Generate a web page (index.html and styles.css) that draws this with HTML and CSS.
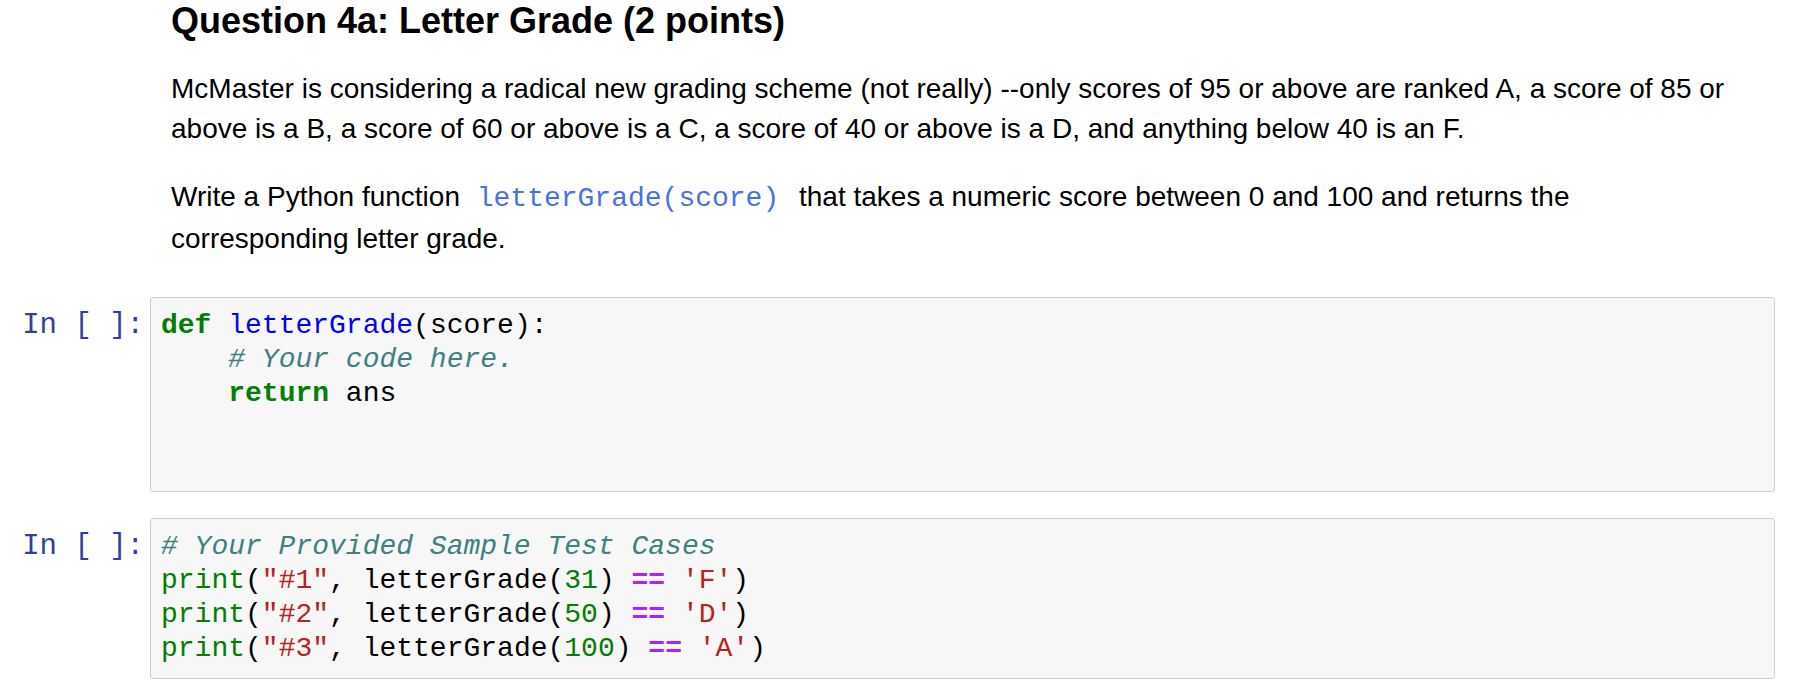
FILE: index.html
```html
<!DOCTYPE html>
<html lang="en">
<head>
<meta charset="utf-8">
<title>Question 4a: Letter Grade</title>
<link rel="stylesheet" href="styles.css">
</head>
<body>
<div class="notebook">
  <div class="cell md-cell">
    <div class="prompt"></div>
    <div class="md-body">
      <h2 class="md-h2">Question 4a: Letter Grade (2 points)</h2>
      <p class="md-p">McMaster is considering a radical new grading scheme (not really) --only scores of 95 or above are ranked A, a score of 85 or above is a B, a score of 60 or above is a C, a score of 40 or above is a D, and anything below 40 is an F.</p>
      <p class="md-p md-p2">Write a Python function <code class="inline-code">letterGrade(score)</code> that takes a numeric score between 0 and 100 and returns the corresponding letter grade.</p>
    </div>
  </div>

  <div class="cell code-cell">
    <div class="prompt">In&nbsp;[&nbsp;]:</div>
    <div class="input-box"><pre class="code"><span class="k">def</span> <span class="nf">letterGrade</span>(score):
    <span class="c">#&nbsp;Your code here.</span>
    <span class="k">return</span> ans
&nbsp;
&nbsp;</pre></div>
  </div>

  <div class="cell code-cell cell-2">
    <div class="prompt">In&nbsp;[&nbsp;]:</div>
    <div class="input-box"><pre class="code"><span class="c">#&nbsp;Your Provided Sample Test Cases</span>
<span class="nb">print</span>(<span class="s">"#1"</span>, letterGrade(<span class="mi">31</span>) <span class="o">==</span> <span class="s">'F'</span>)
<span class="nb">print</span>(<span class="s">"#2"</span>, letterGrade(<span class="mi">50</span>) <span class="o">==</span> <span class="s">'D'</span>)
<span class="nb">print</span>(<span class="s">"#3"</span>, letterGrade(<span class="mi">100</span>) <span class="o">==</span> <span class="s">'A'</span>)</pre></div>
  </div>
</div>
</body>
</html>
```

FILE: styles.css
```css
html, body {
  margin: 0;
  padding: 0;
  background: #ffffff;
}

body {
  font-family: "Liberation Sans", Arial, Helvetica, sans-serif;
  color: #000000;
}

.notebook {
  width: 1775px;
}

.cell {
  display: flex;
  align-items: flex-start;
}

.prompt {
  width: 150px;
  flex: 0 0 150px;
  box-sizing: border-box;
  padding-right: 6px;
  padding-top: 12px;
  text-align: right;
  font-family: "Liberation Mono", "Courier New", monospace;
  font-size: 29px;
  line-height: 34px;
  color: #303F9F;
  white-space: nowrap;
}

.md-body {
  flex: 1;
  padding-left: 21px;
  padding-right: 32px;
}

.md-h2 {
  margin: 0;
  font-size: 36px;
  line-height: 41px;
  font-weight: bold;
}

.md-p {
  margin: 28px 0 0 0;
  font-size: 28px;
  line-height: 40px;
}

.md-p2 {
  margin-top: 28px;
}

.inline-code {
  font-family: "Liberation Mono", "Courier New", monospace;
  font-size: 28px;
  color: #4573e3;
  padding: 0 12px 0 9px;
}

.code-cell {
  margin-top: 38px;
}

.cell-2 {
  margin-top: 26px;
}

.input-box {
  flex: 1;
  box-sizing: border-box;
  background: #f7f7f7;
  border: 1px solid #cfcfcf;
  border-radius: 3px;
  padding: 11px 10px 12px 10px;
}

.code {
  margin: 0;
  font-family: "Liberation Mono", "Courier New", monospace;
  font-size: 28px;
  line-height: 34px;
  color: #000000;
  white-space: pre;
}

.k { color: #008000; font-weight: bold; }
.nf { color: #0000ff; }
.c { color: #408080; font-style: italic; }
.nb { color: #008000; }
.s { color: #ba2121; }
.mi { color: #008000; }
.o { color: #aa22ff; font-weight: bold; }
```
